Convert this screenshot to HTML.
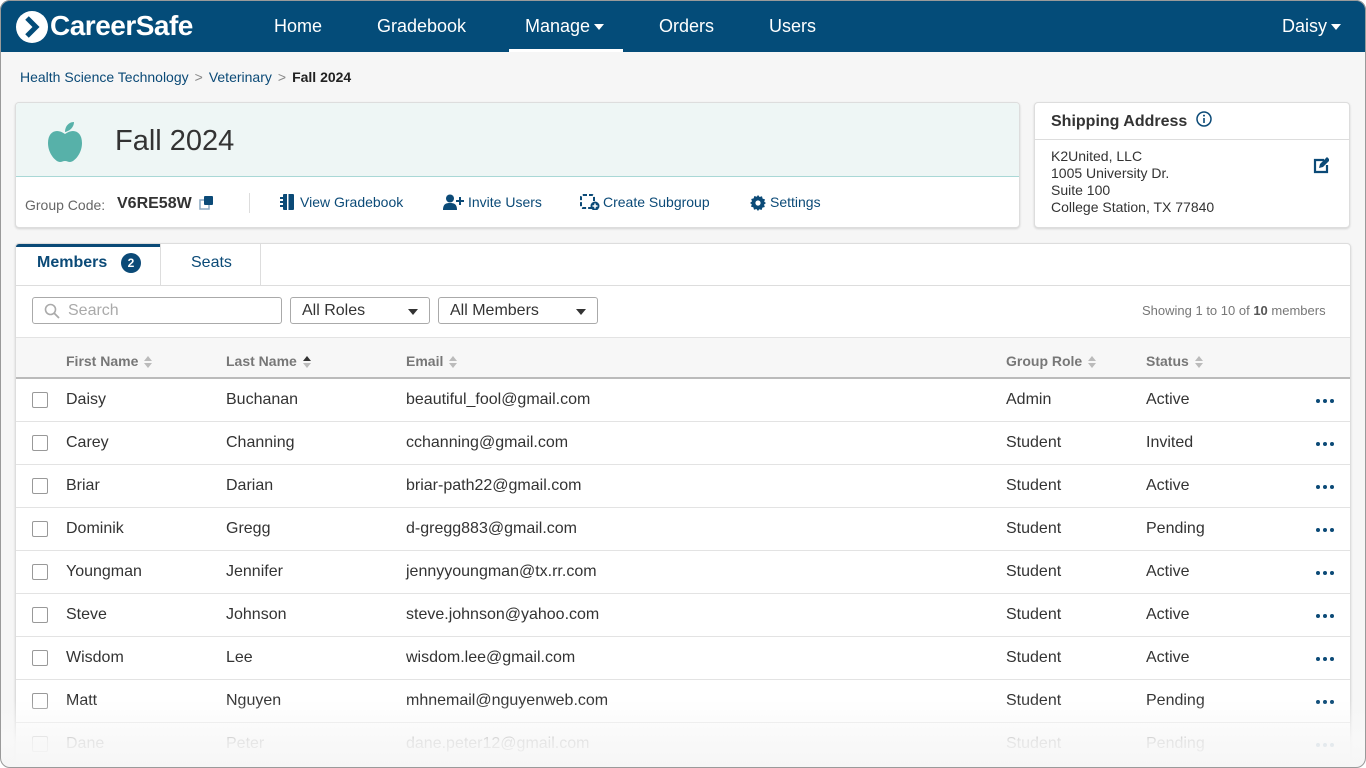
<!DOCTYPE html>
<html><head><meta charset="utf-8"><style>
*{box-sizing:border-box;margin:0;padding:0}
body{width:1366px;height:768px;overflow:hidden;background:#fff;font-family:"Liberation Sans",Arial,sans-serif;color:#333}
.frame{position:absolute;left:0;top:0;width:1366px;height:768px;border-radius:10px;overflow:hidden;background:#f6f6f6}
.bord{position:absolute;left:0;top:0;width:1366px;height:768px;border:1px solid #9a9a9a;border-radius:10px;pointer-events:none}
.nav{position:absolute;left:0;top:0;width:1366px;height:52px;background:#044c79;color:#fff}
.nav .it{position:absolute;top:16px;font-size:18px}
.logo{position:absolute;left:15px;top:10px;font-size:28px;font-weight:bold;letter-spacing:-0.5px}
.tri{display:inline-block;width:0;height:0;border-left:5px solid transparent;border-right:5px solid transparent;border-top:6px solid #fff;vertical-align:middle;margin-left:4px}
.bc{position:absolute;left:20px;top:69px;font-size:14px;color:#0b4a77}
.bc .sep{color:#888;margin:0 6px}
.card{position:absolute;background:#fff;border:1px solid #ddd;border-radius:4px;box-shadow:0 1px 2px rgba(0,0,0,.15)}
.lnk{position:absolute;top:194px;font-size:14px;color:#0b4a77}
.abs{position:absolute}
.th{position:absolute;top:353px;font-size:14px;font-weight:bold;color:#777}
.srt{display:inline-block;margin-left:6px;vertical-align:middle;width:8px;height:12px;position:relative}
.srt:before{content:"";position:absolute;top:0;left:0;border-left:4px solid transparent;border-right:4px solid transparent;border-bottom:5px solid #bbb}
.srt:after{content:"";position:absolute;bottom:0;left:0;border-left:4px solid transparent;border-right:4px solid transparent;border-top:5px solid #bbb}
.srt.up:before{border-bottom-color:#333}
.row{position:absolute;left:16px;width:1334px;height:43px;border-bottom:1px solid #e3e3e3;font-size:16px;color:#333}
.row span{position:absolute;top:12px}
.cb{position:absolute;left:16px;top:13px;width:16px;height:16px;border:1px solid #999;border-radius:2px;background:#fff}
.dots{position:absolute;left:1300px;top:20px;width:18px;height:4px}
.dots i{position:absolute;top:0;width:4px;height:4px;border-radius:2px;background:#0b4a77}
.sel{position:absolute;top:297px;height:27px;border:1px solid #aaa;border-radius:3px;font-size:16px;padding:4px 11px;color:#333;background:#fff}
.sel .t{position:absolute;right:11px;top:11px;border-left:5px solid transparent;border-right:5px solid transparent;border-top:6px solid #333}
</style></head><body><div class="frame">
<div class="nav">
 <div class="logo"><svg width="34" height="34" viewBox="0 0 34 34" style="position:absolute;left:0;top:0"><circle cx="17" cy="17" r="16" fill="#fff"/><path d="M12 8 L21 17 L12 26" stroke="#044c79" stroke-width="5" fill="none"/></svg><span style="margin-left:35px">CareerSafe</span></div>
 <div class="it" style="left:274px">Home</div>
 <div class="it" style="left:377px">Gradebook</div>
 <div class="it" style="left:525px">Manage<span class="tri"></span></div>
 <div class="abs" style="left:509px;top:49px;width:114px;height:3px;background:#fff"></div>
 <div class="it" style="left:659px">Orders</div>
 <div class="it" style="left:769px">Users</div>
 <div class="it" style="left:1282px">Daisy<span class="tri"></span></div>
</div>
<div class="bc">Health Science Technology<span class="sep">&gt;</span>Veterinary<span class="sep">&gt;</span><b style="color:#222">Fall 2024</b></div>

<div class="card" style="left:15px;top:102px;width:1005px;height:126px;overflow:hidden">
 <div class="abs" style="left:0;top:0;width:1005px;height:74px;background:#eef6f5;border-bottom:1px solid #a9d8d6"></div>
 <svg class="abs" style="left:31px;top:17px" width="36" height="42" viewBox="0 0 36 42"><path d="M18 14 C10 8 1 11 1 23 C1 34 9 42 13 42 C15 42 16 41 18 41 C20 41 21 42 23 42 C27 42 35 34 35 23 C35 11 26 8 18 14Z" fill="#57b1a9"/><path d="M18 12 C18 6 22 2 27 2 C27 7 23 11 18 12Z" fill="#57b1a9"/></svg>
 <div class="abs" style="left:99px;top:22px;font-size:29px;color:#333">Fall 2024</div>
 <div class="abs" style="left:9px;top:94px;font-size:14px;color:#666">Group Code:</div>
 <div class="abs" style="left:101px;top:92px;font-size:16px;font-weight:bold;color:#333">V6RE58W</div>
 <svg class="abs" style="left:183px;top:92px" width="16" height="16"><rect x="1" y="5" width="9" height="9" fill="none" stroke="#8aa8c2" stroke-width="1.5"/><rect x="5" y="1" width="9" height="9" rx="1" fill="#0b4a77"/></svg>
 <div class="abs" style="left:233px;top:90px;width:1px;height:20px;background:#ddd"></div>
</div>
<svg class="abs" style="left:280px;top:194px" width="15" height="16"><rect x="3" y="0" width="11" height="16" rx="1" fill="#0b4a77"/><rect x="0" y="3" width="4" height="2" fill="#0b4a77"/><rect x="0" y="7" width="4" height="2" fill="#0b4a77"/><rect x="0" y="11" width="4" height="2" fill="#0b4a77"/><rect x="7" y="0" width="1.5" height="16" fill="#fff"/></svg>
<div class="lnk" style="left:300px">View Gradebook</div>
<svg class="abs" style="left:443px;top:194px" width="22" height="16"><circle cx="7" cy="4.5" r="4" fill="#0b4a77"/><path d="M0 16 C0 10 3 9 7 9 C11 9 14 10 14 16Z" fill="#0b4a77"/><path d="M17 3v8M13 7h8" stroke="#0b4a77" stroke-width="2"/></svg>
<div class="lnk" style="left:468px">Invite Users</div>
<svg class="abs" style="left:580px;top:194px" width="20" height="16"><rect x="1" y="1" width="13" height="13" rx="2" fill="none" stroke="#0b4a77" stroke-width="2" stroke-dasharray="4 2"/><circle cx="15" cy="12" r="4.5" fill="#0b4a77"/><path d="M15 9.5v5M12.5 12h5" stroke="#fff" stroke-width="1.5"/></svg>
<div class="lnk" style="left:603px">Create Subgroup</div>
<svg class="abs" style="left:750px;top:195px" width="16" height="16" viewBox="0 0 16 16"><path d="M8 0l1.6 2 2.4-.8.6 2.4 2.4.8-.8 2.4L16 8l-2 1.6.8 2.4-2.4.6-.8 2.4-2.4-.8L8 16l-1.6-2-2.4.8-.6-2.4-2.4-.8.8-2.4L0 8l2-1.6-.8-2.4 2.4-.6.8-2.4 2.4.8Z" fill="#0b4a77"/><circle cx="8" cy="8" r="2.6" fill="#fff"/></svg>
<div class="lnk" style="left:770px">Settings</div>

<div class="card" style="left:1034px;top:102px;width:316px;height:126px">
 <div class="abs" style="left:16px;top:10px;font-size:16px;font-weight:bold;color:#333">Shipping Address</div>
 <svg class="abs" style="left:161px;top:8px" width="16" height="16"><circle cx="8" cy="8" r="7" fill="none" stroke="#0b4a77" stroke-width="1.5"/><rect x="7.2" y="7" width="1.6" height="5" fill="#0b4a77"/><circle cx="8" cy="4.6" r="1" fill="#0b4a77"/></svg>
 <div class="abs" style="left:0;top:36px;width:314px;height:1px;background:#ddd"></div>
 <div class="abs" style="left:16px;top:45px;font-size:14px;line-height:17px;color:#333">K2United, LLC<br>1005 University Dr.<br>Suite 100<br>College Station, TX 77840</div>
 <svg class="abs" style="left:277px;top:54px" width="17" height="17"><path d="M12 3H3v12h12V8" fill="none" stroke="#0b4a77" stroke-width="2.2"/><path d="M7 11l1-4 7-7 3 3-7 7z" fill="#0b4a77"/></svg>
</div>

<div class="card" style="left:15px;top:243px;width:1336px;height:540px;overflow:hidden">
 <div class="abs" style="left:0;top:0;width:144px;height:3px;background:#0b4a77"></div>
 <div class="abs" style="left:144px;top:0;width:1px;height:42px;background:#ddd"></div>
 <div class="abs" style="left:244px;top:0;width:1px;height:42px;background:#ddd"></div>
 <div class="abs" style="left:0;top:41px;width:1336px;height:1px;background:#ddd"></div>
 <div class="abs" style="left:21px;top:10px;font-size:16px;font-weight:bold;color:#0b4a77">Members</div>
 <div class="abs" style="left:105px;top:9px;width:20px;height:20px;border-radius:10px;background:#0b4a77;color:#fff;font-size:12px;font-weight:bold;text-align:center;line-height:20px">2</div>
 <div class="abs" style="left:175px;top:10px;font-size:16px;color:#0b4a77">Seats</div>
 <div class="abs" style="left:0;top:93px;width:1336px;height:42px;background:#f7f7f7;border-top:1px solid #e3e3e3;border-bottom:2px solid #bbb"></div>
</div>
<div class="sel" style="left:32px;width:250px;color:#aaa"><svg style="position:absolute;left:11px;top:5px" width="16" height="16"><circle cx="6.5" cy="6.5" r="5" fill="none" stroke="#aaa" stroke-width="1.6"/><path d="M10 10l5 5" stroke="#aaa" stroke-width="1.8"/></svg><span style="margin-left:24px">Search</span></div>
<div class="sel" style="left:290px;width:140px">All Roles<span class="t"></span></div>
<div class="sel" style="left:438px;width:160px">All Members<span class="t"></span></div>
<div class="abs" style="left:1142px;top:303px;font-size:13px;color:#777">Showing 1 to 10 of <b style="color:#555">10</b> members</div>

<div class="th" style="left:66px">First Name<span class="srt"></span></div>
<div class="th" style="left:226px">Last Name<span class="srt up"></span></div>
<div class="th" style="left:406px">Email<span class="srt"></span></div>
<div class="th" style="left:1006px">Group Role<span class="srt"></span></div>
<div class="th" style="left:1146px">Status<span class="srt"></span></div>

<div class="row" style="top:379px"><i class="cb"></i><span style="left:50px">Daisy</span><span style="left:210px">Buchanan</span><span style="left:390px">beautiful_fool@gmail.com</span><span style="left:990px">Admin</span><span style="left:1130px">Active</span><div class="dots"><i style="left:0"></i><i style="left:7px"></i><i style="left:14px"></i></div></div>
<div class="row" style="top:422px"><i class="cb"></i><span style="left:50px">Carey</span><span style="left:210px">Channing</span><span style="left:390px">cchanning@gmail.com</span><span style="left:990px">Student</span><span style="left:1130px">Invited</span><div class="dots"><i style="left:0"></i><i style="left:7px"></i><i style="left:14px"></i></div></div>
<div class="row" style="top:465px"><i class="cb"></i><span style="left:50px">Briar</span><span style="left:210px">Darian</span><span style="left:390px">briar-path22@gmail.com</span><span style="left:990px">Student</span><span style="left:1130px">Active</span><div class="dots"><i style="left:0"></i><i style="left:7px"></i><i style="left:14px"></i></div></div>
<div class="row" style="top:508px"><i class="cb"></i><span style="left:50px">Dominik</span><span style="left:210px">Gregg</span><span style="left:390px">d-gregg883@gmail.com</span><span style="left:990px">Student</span><span style="left:1130px">Pending</span><div class="dots"><i style="left:0"></i><i style="left:7px"></i><i style="left:14px"></i></div></div>
<div class="row" style="top:551px"><i class="cb"></i><span style="left:50px">Youngman</span><span style="left:210px">Jennifer</span><span style="left:390px">jennyyoungman@tx.rr.com</span><span style="left:990px">Student</span><span style="left:1130px">Active</span><div class="dots"><i style="left:0"></i><i style="left:7px"></i><i style="left:14px"></i></div></div>
<div class="row" style="top:594px"><i class="cb"></i><span style="left:50px">Steve</span><span style="left:210px">Johnson</span><span style="left:390px">steve.johnson@yahoo.com</span><span style="left:990px">Student</span><span style="left:1130px">Active</span><div class="dots"><i style="left:0"></i><i style="left:7px"></i><i style="left:14px"></i></div></div>
<div class="row" style="top:637px"><i class="cb"></i><span style="left:50px">Wisdom</span><span style="left:210px">Lee</span><span style="left:390px">wisdom.lee@gmail.com</span><span style="left:990px">Student</span><span style="left:1130px">Active</span><div class="dots"><i style="left:0"></i><i style="left:7px"></i><i style="left:14px"></i></div></div>
<div class="row" style="top:680px"><i class="cb"></i><span style="left:50px">Matt</span><span style="left:210px">Nguyen</span><span style="left:390px">mhnemail@nguyenweb.com</span><span style="left:990px">Student</span><span style="left:1130px">Pending</span><div class="dots"><i style="left:0"></i><i style="left:7px"></i><i style="left:14px"></i></div></div>
<div class="row" style="top:723px"><i class="cb"></i><span style="left:50px">Dane</span><span style="left:210px">Peter</span><span style="left:390px">dane.peter12@gmail.com</span><span style="left:990px">Student</span><span style="left:1130px">Pending</span><div class="dots"><i style="left:0"></i><i style="left:7px"></i><i style="left:14px"></i></div></div>
<div class="abs" style="left:0;top:700px;width:1366px;height:68px;background:linear-gradient(rgba(255,255,255,0),rgba(248,248,248,.9) 60%,#f6f6f6)"></div>
</div><div class="bord"></div></body></html>
